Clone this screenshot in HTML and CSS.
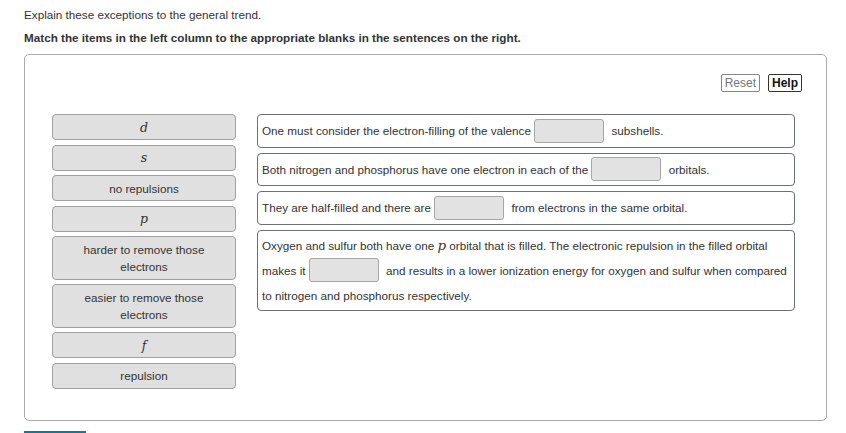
FILE: index.html
```html
<!DOCTYPE html>
<html>
<head>
<meta charset="utf-8">
<link rel="stylesheet" href="styles.css">
</head>
<body>
<p class="intro">Explain these exceptions to the general trend.</p>
<p class="instr">Match the items in the left column to the appropriate blanks in the sentences on the right.</p>
<div class="box">
  <div class="toolbar">
    <span class="btn btn-reset">Reset</span>
    <span class="btn btn-help">Help</span>
  </div>
  <div class="main">
    <div class="items">
      <div class="item"><span class="math">d</span></div>
      <div class="item"><span class="math">s</span></div>
      <div class="item">no repulsions</div>
      <div class="item"><span class="math">p</span></div>
      <div class="item">harder to remove those electrons</div>
      <div class="item">easier to remove those electrons</div>
      <div class="item"><span class="math">f</span></div>
      <div class="item">repulsion</div>
    </div>
    <div class="sentences">
      <div class="row">One must consider the electron-filling of the valence <span class="blank"></span> subshells.</div>
      <div class="row">Both nitrogen and phosphorus have one electron in each of the <span class="blank"></span> orbitals.</div>
      <div class="row">They are half-filled and there are <span class="blank"></span> from electrons in the same orbital.</div>
      <div class="row">Oxygen and sulfur both have one <span class="math mathinline">p</span> orbital that is filled. The electronic repulsion in the filled orbital makes it <span class="blank"></span> and results in a lower ionization energy for oxygen and sulfur when compared to nitrogen and phosphorus respectively.</div>
    </div>
  </div>
</div>
<div class="bar"></div>
</body>
</html>
```
FILE: styles.css
```css
html, body {
  margin: 0;
  padding: 0;
  background: #fff;
}
body {
  font-family: "Liberation Sans", Arial, sans-serif;
  font-size: 11.7px;
  color: #333;
  padding-left: 24px;
}
.intro {
  margin: 0;
  padding-top: 8px;
  line-height: 14px;
}
.instr {
  margin: 9px 0 0 0;
  line-height: 14px;
  font-weight: bold;
}
.box {
  margin-top: 9px;
  width: 801px;
  height: 365px;
  border: 1px solid #aaa;
  border-radius: 5px;
}
.toolbar {
  display: flex;
  justify-content: flex-end;
  gap: 8px;
  padding: 19px 24px 0 0;
}
.btn {
  display: inline-block;
  border: 1px solid #555;
  border-radius: 2px;
  padding: 0 3px;
  line-height: 16px;
  font-size: 12px;
}
.btn-reset {
  color: #777;
  border-color: #888;
}
.btn-help {
  color: #111;
  font-weight: bold;
  border-color: #333;
}
.main {
  display: flex;
  gap: 21px;
  margin-top: 22px;
  padding-left: 27px;
}
.items {
  width: 184px;
  display: flex;
  flex-direction: column;
  gap: 4.5px;
}
.item {
  background: #e0e0e0;
  border: 1px solid #a0a0a0;
  border-radius: 4px;
  text-align: center;
  line-height: 17.5px;
  padding: 3.5px 22px 3px;
  min-height: 17.5px;
}
.math {
  font-family: "DejaVu Serif", "Liberation Serif", serif;
  font-style: italic;
  font-size: 12.5px;
}
.item .math {
  line-height: 0;
}
.mathinline {
  font-size: 13.5px;
  color: #333;
}
.sentences {
  width: 538px;
  display: flex;
  flex-direction: column;
  gap: 5px;
}
.row {
  border: 1px solid #6b7175;
  border-radius: 4px;
  padding: 3px 4px 3.5px;
  line-height: 25px;
}
.sentences .row:last-child {
  padding: 2px 4px 2px;
}
.blank {
  display: inline-block;
  width: 68px;
  height: 22px;
  background: #e2e2e2;
  border: 1px solid #a6a6a6;
  border-radius: 3px;
  vertical-align: middle;
  margin: -2px 4px 0 0;
}
.bar {
  margin-top: 10px;
  width: 62px;
  height: 3px;
  background: #007fa5;
}
```
